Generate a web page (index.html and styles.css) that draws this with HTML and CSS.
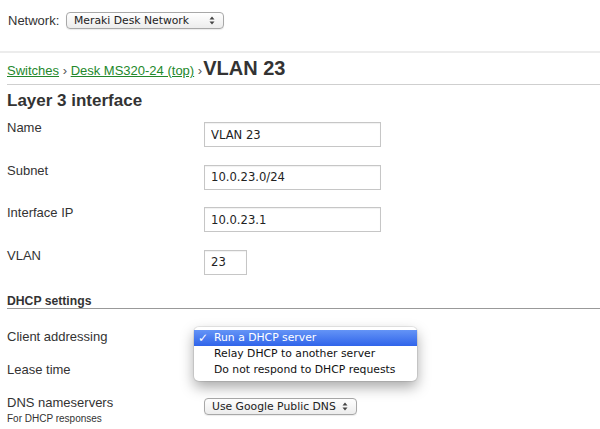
FILE: index.html
```html
<!DOCTYPE html>
<html>

<head>
    <title>VLAN 23 - Layer 3 interface</title>
    <meta charset="UTF-8">
    <link rel="stylesheet" href="styles.css">
</head>

<body>
    <div class="topbar">
        <span class="topbar-label">Network:</span>
        <span class="select network-select">
            Meraki Desk Network
            <svg class="arrows" width="6" height="9" viewBox="0 0 6 9"><path d="M3 0.5 L5.5 3.5 H0.5 Z M3 8.5 L5.5 5.5 H0.5 Z" fill="#444"/></svg>
        </span>
    </div>

    <div class="crumbs">
        <a href="#">Switches</a> <span class="sep">›</span> <a href="#">Desk MS320-24 (top)</a> <span class="sep">›</span><span class="current">VLAN 23</span>
    </div>

    <h2 class="section-head">Layer 3 interface</h2>

    <div class="field">
        <label class="field-label">Name</label>
        <input type="text" class="text-input" value="VLAN 23">
    </div>
    <div class="field">
        <label class="field-label">Subnet</label>
        <input type="text" class="text-input" value="10.0.23.0/24">
    </div>
    <div class="field">
        <label class="field-label">Interface IP</label>
        <input type="text" class="text-input" value="10.0.23.1">
    </div>
    <div class="field">
        <label class="field-label">VLAN</label>
        <input type="text" class="text-input short" value="23">
    </div>

    <h3 class="sub-head">DHCP settings</h3>

    <div class="dhcp-row first">
        <label class="field-label">Client addressing</label>
        <div class="control">
            <ul class="menu">
                <li class="selected"><span class="check">✓</span>Run a DHCP server</li>
                <li>Relay DHCP to another server</li>
                <li>Do not respond to DHCP requests</li>
            </ul>
        </div>
    </div>
    <div class="dhcp-row">
        <label class="field-label">Lease time</label>
        <div class="control"></div>
    </div>
    <div class="dhcp-row">
        <div class="field-label">
            DNS nameservers
            <div class="hint">For DHCP responses</div>
        </div>
        <div class="control">
            <span class="select dns-select">
                Use Google Public DNS
                <svg class="arrows" width="6" height="9" viewBox="0 0 6 9"><path d="M3 0.5 L5.5 3.5 H0.5 Z M3 8.5 L5.5 5.5 H0.5 Z" fill="#444"/></svg>
            </span>
        </div>
    </div>
</body>

</html>
```

FILE: styles.css
```css
* {
    margin: 0;
    padding: 0;
    box-sizing: border-box;
}

body {
    font-family: "Liberation Sans", Arial, Helvetica, sans-serif;
    font-size: 13px;
    color: #333;
    background: #fff;
    width: 600px;
}

/* top network picker */
.topbar {
    height: 53px;
    padding: 12px 0 0 8px;
    border-bottom: 2px solid #ececec;
    display: flex;
    align-items: flex-start;
}

.topbar-label {
    line-height: 17px;
    width: 58px;
}

.select {
    position: relative;
    display: inline-flex;
    align-items: center;
    height: 17px;
    padding-left: 7px;
    font-family: "DejaVu Sans", sans-serif;
    font-size: 10.8px;
    color: #222;
    background: linear-gradient(#ffffff, #ececec);
    border: 1px solid #a8a8a8;
    border-radius: 4px;
    box-shadow: 0 1px 1px rgba(0,0,0,0.08);
}

.select .arrows {
    position: absolute;
    right: 8px;
    top: 3px;
}

.network-select {
    width: 158px;
}

.dns-select {
    width: 153px;
    margin-top: 3px;
    padding-left: 7px;
}

/* breadcrumb */
.crumbs {
    margin-left: 7px;
    height: 32px;
    line-height: 31px;
    border-bottom: 1px solid #cfcfcf;
}

.crumbs a {
    color: #23882b;
    text-decoration: underline;
}

.crumbs .sep {
    color: #555;
}

.crumbs .current {
    margin-left: 1px;
    font-size: 20px;
    font-weight: bold;
    color: #333;
}

.section-head {
    margin-left: 7px;
    font-size: 17px;
    line-height: 32px;
    color: #333;
}

/* form rows */
.field {
    margin-left: 7px;
    height: 42.5px;
    display: flex;
    align-items: flex-start;
}

.field-label {
    width: 197px;
    padding-top: 3px;
    line-height: 16px;
}

.text-input {
    width: 177px;
    height: 25px;
    margin-top: 5px;
    padding: 0 6px;
    font-family: "DejaVu Sans", sans-serif;
    font-size: 11.6px;
    color: #222;
    border: 1px solid #c6c6c6;
    box-shadow: inset 0 1px 1px rgba(0,0,0,0.06);
    outline: none;
}

.text-input.short {
    width: 43px;
}

.sub-head {
    margin-left: 7px;
    height: 22px;
    padding-top: 6px;
    font-size: 12.2px;
    line-height: 16px;
    color: #333;
    border-bottom: 1px solid #999;
}

.dhcp-row {
    margin-left: 7px;
    height: 33px;
    display: flex;
    align-items: flex-start;
}

.dhcp-row.first {
    margin-top: 20px;
}

.dhcp-row .field-label {
    padding-top: 0;
}

.hint {
    font-size: 10px;
    line-height: 12px;
    margin-top: 2px;
}

.control {
    position: relative;
}

/* open dropdown */
.menu {
    position: absolute;
    top: -2px;
    left: -10px;
    z-index: 2;
    width: 223px;
    padding: 3px 0;
    list-style: none;
    background: #fff;
    border-radius: 5px;
    box-shadow: 0 0 0 1px rgba(0,0,0,0.08), 0 6px 14px rgba(0,0,0,0.35);
    font-family: "DejaVu Sans", sans-serif;
    font-size: 10.8px;
    color: #111;
}

.menu li {
    position: relative;
    line-height: 16px;
    padding-left: 20px;
    white-space: nowrap;
}

.menu li.selected {
    color: #fff;
    background: linear-gradient(#6494f6, #3064ea);
}

.menu .check {
    position: absolute;
    left: 4px;
    font-size: 12px;
    font-weight: bold;
}
```
